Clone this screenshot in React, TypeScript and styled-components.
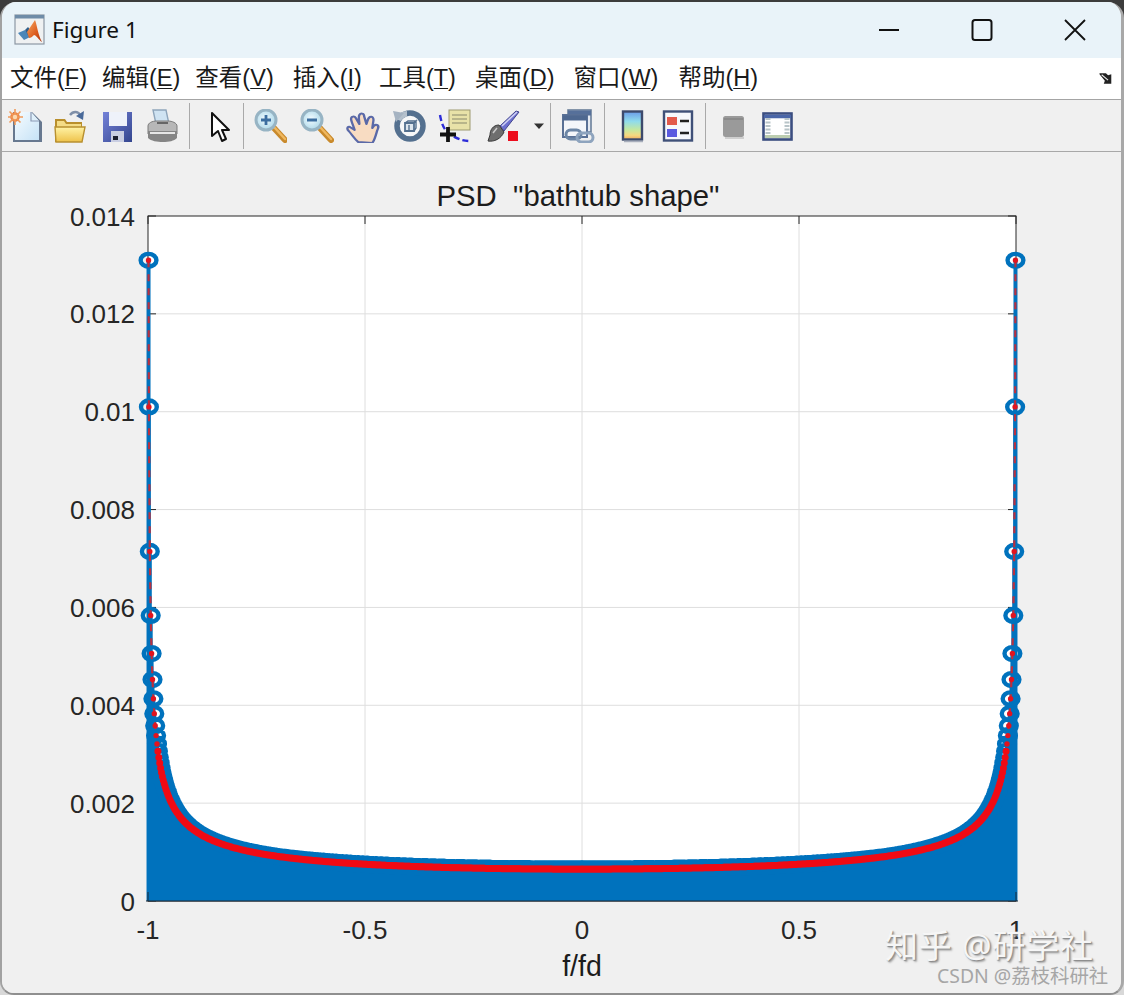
import React, { useMemo } from 'react';
import styled, { createGlobalStyle } from 'styled-components';

const GlobalStyle = createGlobalStyle`
  html, body {
    margin: 0;
    padding: 0;
    height: 995px;
    overflow: hidden;
    background: linear-gradient(180deg, #3c3c3c 0, #3c3c3c 40px, #d8d8d8 60px, #d8d8d8 100%);
  }
`;

const Window = styled.div`
  position: relative;
  box-sizing: border-box;
  height: 993px;
  margin-top: 2px;
  display: flex;
  flex-direction: column;
  background: #f0f0f0;
  border-left: 2px solid #a2a2a2;
  border-right: 3px solid #a8a8a8;
  border-bottom: 2px solid #8f8f8f;
  border-radius: 16px 16px 14px 14px;
  overflow: hidden;
  font-family: "Noto Sans", "Noto Sans CJK SC", sans-serif;
  color: #111;
`;

const TitleBar = styled.div`
  height: 56px;
  display: flex;
  align-items: center;
  background: #e9f3f9;
  padding-left: 12px;
`;

const TitleText = styled.span`
  margin-left: 6px;
  font-size: 22.600px;
  line-height: 56px;
`;

const Controls = styled.div`
  margin-left: auto;
  display: flex;
  align-items: center;
  gap: 1px;
`;

const ControlButton = styled.div`
  width: 92px;
  height: 56px;
  display: flex;
  align-items: center;
  justify-content: center;
`;

const MenuBar = styled.div`
  height: 41px;
  display: flex;
  align-items: center;
  background: #fff;
  padding-left: 8px;
  border-bottom: 1px solid #a4a4a4;
`;

const MenuItem = styled.span<{ $ml: number }>`
  margin-left: ${(p) => p.$ml}px;
  font-size: 23.500px;
  line-height: 41px;
  color: #1a1a1a;
  white-space: nowrap;
  font-family: "Liberation Sans", "Noto Sans CJK SC", sans-serif;

  u {
    text-underline-offset: 2px;
    text-decoration-thickness: 1px;
  }
`;

const MenuArrow = styled.div`
  margin-left: auto;
  margin-right: 5px;
  display: flex;
`;

const Toolbar = styled.div`
  height: 51px;
  display: flex;
  align-items: center;
  background: #f0f0f0;
  padding-left: 6px;
  border-bottom: 1px solid #a8a8a8;
`;

const ToolIcon = styled.div<{ $ml: number; $w?: number }>`
  flex: none;
  width: ${(p) => p.$w ?? 34}px;
  height: 34px;
  margin-left: ${(p) => p.$ml}px;
  svg {
    display: block;
  }
`;

const ToolSep = styled.div<{ $ml: number }>`
  flex: none;
  width: 1px;
  height: 46px;
  margin-left: ${(p) => p.$ml}px;
  background: #a9a9a9;
`;

const FigureArea = styled.div`
  flex: 1;
  background: #f0f0f0;
`;

const Plot = styled.svg`
  display: block;
  font-family: "Liberation Sans", Arial, sans-serif;
`;

const TickLabel = styled.text`
  font-size: 26px;
  fill: #262626;
`;

const AxisTitle = styled.text<{ $size: number }>`
  font-size: ${(p) => p.$size}px;
  fill: #1c1c1c;
  white-space: pre;
`;

const Watermark = styled.div`
  position: absolute;
  left: 883px;
  top: 922px;
  font-size: 33px;
  line-height: 44px;
  letter-spacing: 0.8px;
  color: #f6f6f6;
  text-shadow: 1px 1px 1px #8a8a8a, 2px 2px 2px #a8a8a8;
  white-space: pre;
`;

const Credit = styled.div`
  position: absolute;
  left: 935px;
  top: 961px;
  font-size: 19.400px;
  line-height: 26px;
  color: #a6a6a6;
  white-space: pre;
`;

const LEFT = 148;
const RIGHT = 1016;
const TOP = 216;
const BOTTOM = 901;
const yTicks = [
  ['0', 0],
  ['0.002', 0.002],
  ['0.004', 0.004],
  ['0.006', 0.006],
  ['0.008', 0.008],
  ['0.01', 0.01],
  ['0.012', 0.012],
  ['0.014', 0.014],
] as const;
const xTicks = [
  ['-1', -1],
  ['-0.5', -0.5],
  ['0', 0],
  ['0.5', 0.5],
  ['1', 1],
] as const;

const xPos = (f: number) => LEFT + ((f + 1) / 2) * (RIGHT - LEFT);
const yPos = (v: number) => BOTTOM - (v / 0.014) * (BOTTOM - TOP);

// jakes spectrum, sampled every 0.9px like the original stem plot
function samples() {
  const half = (RIGHT - LEFT) / 2;
  const left: { x: number; y: number }[] = [];
  for (let k = 0; k * 0.9 <= half; k++) {
    const off = k === 0 ? 0.535 : k * 0.9;
    const f = -1 + off / half;
    const s = 0.00065 / Math.sqrt(1 - f * f);
    left.push({ x: LEFT + off, y: yPos(s) });
  }
  const right = left.map((p) => ({ x: LEFT + RIGHT - p.x, y: p.y }));
  return { left, right };
}

function Chart() {
  const { stems, rings, tipDots, bodyDots, spikes } = useMemo(() => {
    const { left, right } = samples();
    const pts = [...left, ...right];
    const rx = 7.9;
    const ry = 6.4;
    const fmt = (v: number) => v.toFixed(2);
    const dot = (p: { x: number; y: number }) => `M${fmt(p.x)} ${fmt(p.y)}h0`;
    return {
      stems: pts.map((p) => `M${fmt(p.x)} ${fmt(p.y)}V${BOTTOM}`).join(''),
      rings: pts
        .map(
          (p) =>
            `M${fmt(p.x - rx)} ${fmt(p.y)}a${rx} ${ry} 0 1 0 ${2 * rx} 0a${rx} ${ry} 0 1 0 ${-2 * rx} 0`
        )
        .join(''),
      tipDots: pts.filter((p) => p.y < 750).map(dot).join(''),
      bodyDots: pts.filter((p) => p.y >= 750).map(dot).join(''),
      spikes: [left.slice(0, 10), right.slice(0, 10)]
        .map((l) => 'M' + l.map((p) => `${fmt(p.x)} ${fmt(p.y)}`).join('L'))
        .join(''),
    };
  }, []);

  return (
    <Plot width={1119} height={841} viewBox="2 152 1119 841">
      <rect x={LEFT} y={TOP} width={RIGHT - LEFT} height={BOTTOM - TOP} fill="#fff" />
      {yTicks.slice(1, -1).map(([, v]) => (
        <line key={v} x1={LEFT} x2={RIGHT} y1={yPos(v)} y2={yPos(v)} stroke="#dedede" strokeWidth={1} />
      ))}
      {xTicks.slice(1, -1).map(([, v]) => (
        <line key={v} x1={xPos(v)} x2={xPos(v)} y1={TOP} y2={BOTTOM} stroke="#dedede" strokeWidth={1} />
      ))}
      <rect x={LEFT} y={TOP} width={RIGHT - LEFT} height={BOTTOM - TOP} fill="none" stroke="#262626" strokeWidth={1} />
      {yTicks.map(([, v]) => (
        <path key={v} d={`M${LEFT} ${yPos(v)}h8M${RIGHT} ${yPos(v)}h-8`} stroke="#262626" fill="none" />
      ))}
      {xTicks.map(([, v]) => (
        <path key={v} d={`M${xPos(v)} ${TOP}v8M${xPos(v)} ${BOTTOM}v-8`} stroke="#262626" fill="none" />
      ))}

      <path d={stems} stroke="#0072bd" strokeWidth={4} fill="none" />
      <path d={rings} stroke="#0072bd" strokeWidth={4.4} fill="none" />
      <path d={spikes} stroke="#b9303f" strokeWidth={2.2} strokeDasharray="7 7" fill="none" />
      <path d={tipDots} stroke="#e0141f" strokeWidth={5.4} strokeLinecap="round" fill="none" />
      <path d={bodyDots} stroke="#f00a14" strokeWidth={7} strokeLinecap="round" fill="none" />

      <line x1={LEFT - 2} x2={RIGHT + 2} y1={BOTTOM} y2={BOTTOM} stroke="#1d2a38" strokeWidth={1.2} />
      <path d={`M${LEFT} ${BOTTOM}v-9M${RIGHT} ${BOTTOM}v-9`} stroke="#1d2a38" fill="none" />

      {yTicks.map(([label, v]) => (
        <TickLabel key={v} x={135} y={yPos(v) + 9.5} textAnchor="end">
          {label}
        </TickLabel>
      ))}
      {xTicks.map(([label, v]) => (
        <TickLabel key={v} x={xPos(v)} y={939} textAnchor="middle">
          {label}
        </TickLabel>
      ))}
      <AxisTitle $size={29.3} x={578} y={206} textAnchor="middle">
        {'PSD  "bathtub shape"'}
      </AxisTitle>
      <AxisTitle $size={28.6} x={582} y={976} textAnchor="middle">
        f/fd
      </AxisTitle>
    </Plot>
  );
}

const Icon: React.FC<{ children: React.ReactNode }> = ({ children }) => (
  <svg width={34} height={34} viewBox="0 0 34 34">
    {children}
  </svg>
);

const NewIcon = () => (
  <Icon>
    <defs>
      <linearGradient id="pageFill" x1="0" y1="0" x2="1" y2="1">
        <stop offset="0" stopColor="#f6fcff" />
        <stop offset="1" stopColor="#c6e2f6" />
      </linearGradient>
    </defs>
    <path d="M5 3h19l10 10v20H5z" fill="#67788f" />
    <path d="M7 3h16l8 9v19H7z" fill="url(#pageFill)" />
    <path d="M23 3v9h8" fill="#dff0fb" stroke="#8b9ab5" strokeWidth={1.2} />
    <circle cx={7} cy={8} r={4.800} fill="#ee8444" />
    <path d="M7 0v16M-1 8h16M1.500 2.500l11 11M12.500 2.500l-11 11" stroke="#ef9a5a" strokeWidth={1.6} />
    <circle cx={7} cy={8} r={2.200} fill="#fbd9b0" />
  </Icon>
);

const OpenIcon = () => (
  <Icon>
    <defs>
      <linearGradient id="folderFill" x1="0" y1="0" x2="0" y2="1">
        <stop offset="0" stopColor="#fff3a6" />
        <stop offset="1" stopColor="#eec24a" />
      </linearGradient>
    </defs>
    <path d="M17 6c3-4 8-4 10 0" fill="none" stroke="#7f8fa8" strokeWidth={2.400} />
    <path d="M31 2l-1 9-7-4z" fill="#4a6a9a" />
    <path d="M2 10h10l2 3h15v20H2z" fill="#b98f2c" />
    <path d="M4 12h7l2 3h15v3H4z" fill="#f4dc86" />
    <path d="M2 18h30l-3 15H3z" fill="url(#folderFill)" stroke="#b89030" strokeWidth={1.400} />
  </Icon>
);

const SaveIcon = () => (
  <Icon>
    <defs>
      <linearGradient id="diskFill" x1="0" y1="0" x2="1" y2="1">
        <stop offset="0" stopColor="#7482d8" />
        <stop offset="1" stopColor="#33458e" />
      </linearGradient>
    </defs>
    <path d="M2 3h29v30H2z" fill="url(#diskFill)" />
    <rect x={8} y={3} width={18} height={14} fill="#eef2fa" />
    <rect x={10} y={22} width={13} height={11} fill="#c9cee2" />
    <rect x={12} y={27} width={5} height={4} fill="#1d2030" />
  </Icon>
);

const PrintIcon = () => (
  <Icon>
    <path d="M7 1h13l3 14H10z" fill="#cfe3f2" stroke="#8ea5bb" strokeWidth={1.400} />
    <path d="M2 17c0-3 4-5 9-5h11c4 0 9 2 9 5v8H2z" fill="#b7b7b7" stroke="#7b7b7b" />
    <path d="M2 22h29v7c-3 3-8 4-14 4S5 32 2 29z" fill="#858585" />
    <path d="M4 24h25" stroke="#e6e6e6" strokeWidth={2} />
    <path d="M11 14h11" stroke="#666" strokeWidth={2} />
  </Icon>
);

const CursorIcon = () => (
  <Icon>
    <path
      d="M9 4v23l6-5 4 10 4-2-4-9h7z"
      fill="#fff"
      stroke="#111"
      strokeWidth={2}
      strokeLinejoin="round"
    />
  </Icon>
);

const Lens: React.FC<{ x: number; id: string; plus?: boolean }> = ({ x, id, plus }) => (
  <Icon>
    <defs>
      <radialGradient id={id} cx="0.45" cy="0.45" r="0.6">
        <stop offset="0" stopColor="#f2fbff" />
        <stop offset="1" stopColor="#a9d6e8" />
      </radialGradient>
    </defs>
    <path d={`M${x + 7} 18l12 13`} stroke="#c98a2c" strokeWidth={6} strokeLinecap="round" />
    <path d={`M${x + 8} 18l11 12`} stroke="#f0b860" strokeWidth={2.400} strokeLinecap="round" />
    <circle cx={x} cy={11} r={10} fill={`url(#${id})`} stroke="#97b4c4" strokeWidth={3} />
    <path d={plus ? `M${x - 5} 11h10M${x} 6v10` : `M${x - 5} 11h10`} stroke="#3c6ea0" strokeWidth={2.800} />
  </Icon>
);

const HandIcon = () => (
  <Icon>
    <g transform="translate(-2 0) scale(1.180 1)">
      <path
        d="M12 33c-3-3-5-7-8-11-2-2-1-5 1-4l4 3c-1-4-3-9-3-11 0-3 3-3 4-1l3 6c0-3-1-7 0-9 1-2 4-2 4 1l2 8c1-3 1-6 3-7s3 1 3 3l-1 8c1-2 2-4 4-3s1 3 0 6c-1 4-2 9-4 12z"
        fill="#f8dcc2"
        stroke="#5a69a8"
        strokeWidth={2}
        strokeLinejoin="round"
      />
    </g>
  </Icon>
);

const RotateIcon = () => (
  <Icon>
    <circle cx={18} cy={17} r={13} fill="#f6f7f8" stroke="#54708f" strokeWidth={5.500} />
    <path d="M4 10c2-5 6-8 11-8v6c-3 0-5 2-6 4z" fill="#b4c0cc" />
    <path d="M1 2l11 2-8 9z" fill="#a5b3c2" />
    <path d="M13 14h9v8h-9z" fill="#dde6ee" stroke="#54708f" strokeWidth={1.800} />
    <path d="M13 14l3-2h8l-2 2M22 14l2-2v7l-2 3M17 16v6" fill="none" stroke="#54708f" strokeWidth={1.400} />
  </Icon>
);

const DatatipIcon = () => (
  <Icon>
    <path d="M3 6c2 11 5 16 10 19 5 4 12 7 20 7" fill="none" stroke="#2c2cd8" strokeWidth={2.400} strokeDasharray="6 3" />
    <rect x={12} y={1} width={21} height={20} fill="#e8e2a8" stroke="#9d9a70" />
    <path d="M15 6h15M15 10h15M15 14h15" stroke="#a8a680" strokeWidth={1.600} />
    <path d="M11 18v15M3 25.500h16" stroke="#111" strokeWidth={3.800} />
  </Icon>
);

const BrushIcon = () => (
  <Icon>
    <path d="M33 3l-3-1-16 15 4 5z" fill="#6c6fcf" stroke="#43468e" />
    <path d="M31 3L16 17" stroke="#cfd0f4" strokeWidth={1.500} />
    <path d="M13 16c-6 0-9 5-9 10l-2 6c6 1 13-2 16-9z" fill="#6e6e6e" stroke="#3a3a3a" />
    <path d="M7 24l4-5" stroke="#cacaca" strokeWidth={1.500} />
    <rect x={22} y={22} width={10} height={10} fill="#ed0d1d" />
  </Icon>
);

const DropArrow = () => (
  <svg width={10} height={34} viewBox="0 0 10 34">
    <path d="M0 14.500h10l-5 5.500z" fill="#333" />
  </svg>
);

const LinkIcon = () => (
  <Icon>
    <rect x={7} y={1} width={23} height={22} fill="#e5eaf2" stroke="#6a7f9a" strokeWidth={1.600} />
    <path d="M7 4h23" stroke="#56709a" strokeWidth={5} />
    <rect x={2} y={6} width={24} height={22} fill="#f4f6fa" stroke="#5a7196" strokeWidth={2} />
    <path d="M2 9h24" stroke="#4e6890" strokeWidth={5} />
    <rect x={5} y={21} width={15} height={9} rx={4.500} fill="none" stroke="#6c86a6" strokeWidth={3} />
    <rect x={16} y={24} width={16} height={9} rx={4.500} fill="none" stroke="#8ea4be" strokeWidth={3} />
  </Icon>
);

const ColorbarIcon = () => (
  <Icon>
    <defs>
      <linearGradient id="barFill" x1="0" y1="0" x2="0" y2="1">
        <stop offset="0" stopColor="#6a9ae8" />
        <stop offset="0.35" stopColor="#8fdcec" />
        <stop offset="0.65" stopColor="#c4e8a0" />
        <stop offset="0.85" stopColor="#f6d880" />
        <stop offset="1" stopColor="#f0a860" />
      </linearGradient>
    </defs>
    <rect x={8} y={2.500} width={19} height={28} fill="url(#barFill)" stroke="#3d4a6c" strokeWidth={2.400} />
    <path d="M9 32.500h19" stroke="#a8aebc" strokeWidth={1.400} />
  </Icon>
);

const LegendIcon = () => (
  <Icon>
    <rect x={4} y={2.500} width={28} height={29} fill="#f6f8fc" stroke="#3f5078" strokeWidth={2.400} />
    <rect x={7} y={8} width={10} height={8} fill="#e25a4c" />
    <rect x={7} y={20} width={10} height={8} fill="#5a5ae0" />
    <path d="M20 12h9M20 24h9" stroke="#222" strokeWidth={2.400} />
  </Icon>
);

const GrayIcon = () => (
  <Icon>
    <rect x={7} y={7} width={21} height={21} rx={2.500} fill="#9a9a9a" />
    <path d="M8 10h19" stroke="#8a8a8a" strokeWidth={2} />
    <path d="M9 29h19" stroke="#c4c4c4" strokeWidth={1.600} />
  </Icon>
);

const BoxIcon = () => (
  <Icon>
    <rect x={3.500} y={4.500} width={28} height={26} fill="#fff" stroke="#3b4e80" strokeWidth={2.600} />
    <path d="M4 7.500h27" stroke="#4a66a8" strokeWidth={3.500} />
    <path d="M8 9v17M27 9v17" stroke="#b8c4c8" strokeWidth={5} strokeDasharray="2 1.500" />
    <path d="M5 27.500h25" stroke="#bccdb0" strokeWidth={3} />
  </Icon>
);

const MatlabLogo = () => (
  <svg width={32} height={32} viewBox="0 0 32 32">
    <defs>
      <linearGradient id="peakFill" x1="0" y1="0" x2="1" y2="1">
        <stop offset="0" stopColor="#f6aa64" />
        <stop offset="0.6" stopColor="#dc5a1c" />
        <stop offset="1" stopColor="#a8300c" />
      </linearGradient>
    </defs>
    <rect x={1} y={1} width={29} height={29} fill="#eff1f2" stroke="#8d98a4" strokeWidth={1.200} />
    <rect x={1} y={1} width={29} height={3.500} fill="#6f8ca8" />
    <path d="M4 19l7-3 5 7-6 3z" fill="#4a86b8" />
    <path d="M11 16l3-3 4 5-3 5z" fill="#2e5e8c" />
    <path d="M13 18l8-12c2 5 3 15 7 22-3-2-6-7-8-7-2 2-3 3-5 3z" fill="url(#peakFill)" />
  </svg>
);

const menus: [string, string, number][] = [
  ['文件', 'F', 0],
  ['编辑', 'E', 15],
  ['查看', 'V', 15],
  ['插入', 'I', 19],
  ['工具', 'T', 17],
  ['桌面', 'D', 19],
  ['窗口', 'W', 19],
  ['帮助', 'H', 20],
];

export default function App() {
  return (
    <>
      <GlobalStyle />
      <Window>
        <TitleBar>
          <MatlabLogo />
          <TitleText>Figure 1</TitleText>
          <Controls>
            <ControlButton>
              <svg width={22} height={22} viewBox="0 0 22 22">
                <path d="M1 11h20" stroke="#111" strokeWidth={2} />
              </svg>
            </ControlButton>
            <ControlButton>
              <svg width={22} height={24} viewBox="0 0 22 24">
                <rect x={1.500} y={2} width={19} height={20} rx={2.500} fill="none" stroke="#111" strokeWidth={2} />
              </svg>
            </ControlButton>
            <ControlButton>
              <svg width={22} height={24} viewBox="0 0 22 24">
                <path d="M1 2l20 20M21 2L1 22" stroke="#111" strokeWidth={1.800} fill="none" />
              </svg>
            </ControlButton>
          </Controls>
        </TitleBar>
        <MenuBar>
          {menus.map(([name, key, ml]) => (
            <MenuItem key={key} $ml={ml}>
              {name}(<u>{key}</u>)
            </MenuItem>
          ))}
          <MenuArrow>
            <svg width={18} height={15} viewBox="0 0 16 14">
              <path d="M1 2h6l2 2 3-1v9H5l1-3-5-6z" fill="#222" />
              <path d="M3 3.500l6 5" stroke="#eee" strokeWidth={1} />
            </svg>
          </MenuArrow>
        </MenuBar>
        <Toolbar>
          <ToolIcon $ml={0}><NewIcon /></ToolIcon>
          <ToolIcon $ml={11}><OpenIcon /></ToolIcon>
          <ToolIcon $ml={14}><SaveIcon /></ToolIcon>
          <ToolIcon $ml={11}><PrintIcon /></ToolIcon>
          <ToolSep $ml={9} />
          <ToolIcon $ml={13}><CursorIcon /></ToolIcon>
          <ToolSep $ml={6} />
          <ToolIcon $ml={9}><Lens x={13} id="lensIn" plus /></ToolIcon>
          <ToolIcon $ml={13}><Lens x={12} id="lensOut" /></ToolIcon>
          <ToolIcon $ml={12}><HandIcon /></ToolIcon>
          <ToolIcon $ml={12}><RotateIcon /></ToolIcon>
          <ToolIcon $ml={11}><DatatipIcon /></ToolIcon>
          <ToolIcon $ml={15}><BrushIcon /></ToolIcon>
          <ToolIcon $ml={14} $w={10}><DropArrow /></ToolIcon>
          <ToolSep $ml={6} />
          <ToolIcon $ml={10}><LinkIcon /></ToolIcon>
          <ToolSep $ml={9} />
          <ToolIcon $ml={10}><ColorbarIcon /></ToolIcon>
          <ToolIcon $ml={11}><LegendIcon /></ToolIcon>
          <ToolSep $ml={11} />
          <ToolIcon $ml={10}><GrayIcon /></ToolIcon>
          <ToolIcon $ml={10}><BoxIcon /></ToolIcon>
        </Toolbar>
        <FigureArea>
          <Chart />
        </FigureArea>
        <Watermark>知乎 @研学社</Watermark>
        <Credit>CSDN @荔枝科研社</Credit>
      </Window>
    </>
  );
}
